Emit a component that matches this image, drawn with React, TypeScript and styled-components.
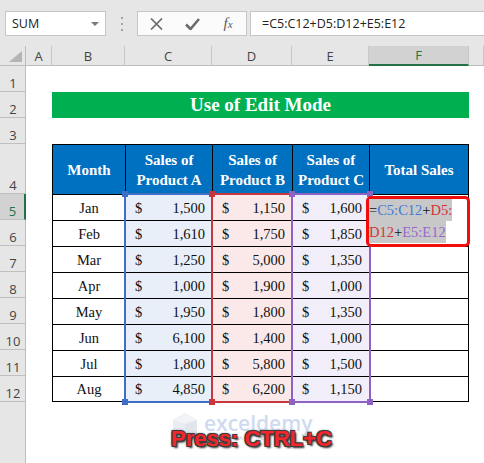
import React from 'react';
import styled, { createGlobalStyle } from 'styled-components';

const GlobalStyle = createGlobalStyle`
  html, body { margin: 0; padding: 0; background: #ffffff; }
  body { width: 484px; height: 463px; overflow: hidden; font-family: "Liberation Serif", serif; }
  * { box-sizing: border-box; }
`;

const COLS = '26px 26px 73px 87px 80px 77px 100px 1fr';
const UI_FONT = '"Segoe UI", "Open Sans", "Noto Sans", sans-serif';
const GREEN = '#217346';

const Page = styled.div`
  position: relative;
  width: 484px;
  height: 463px;
  display: flex;
  flex-direction: column;
  overflow: hidden;
  background: #fff;
`;

/* ---------- formula bar ---------- */
const Toolbar = styled.div`
  height: 46px;
  flex: none;
  background: #e6e6e6;
  display: flex;
  align-items: flex-start;
  padding: 11px 0 0 5px;
  font-family: ${UI_FONT};
`;

const NameBox = styled.div`
  width: 101px;
  height: 25px;
  background: #fff;
  border: 1px solid #c6c6c6;
  display: flex;
  align-items: center;
  justify-content: space-between;
  padding: 0 6px 0 6px;
  font-size: 12.5px;
  color: #222;
`;

const DropArrow = styled.span`
  width: 0;
  height: 0;
  border-left: 4px solid transparent;
  border-right: 4px solid transparent;
  border-top: 4px solid #7a7a7a;
  margin-top: 1px;
`;

const Grip = styled.div`
  width: 2px;
  height: 25px;
  margin: 0 14px 0 15px;
  display: flex;
  flex-direction: column;
  justify-content: center;
  gap: 4px;
  & > i { display: block; width: 2px; height: 2px; background: #a3a3a3; }
`;

const ButtonBox = styled.div`
  width: 110px;
  height: 25px;
  background: #fbfbfb;
  border: 1px solid #c6c6c6;
  display: flex;
  align-items: center;
`;

const ToolButton = styled.div`
  width: 37px;
  height: 23px;
  display: flex;
  align-items: center;
  justify-content: center;
  color: #6b6b6b;
`;

const Fx = styled.span`
  font-family: "Liberation Serif", serif;
  font-style: italic;
  font-size: 15px;
  color: #5a5a5a;
  & > small { font-size: 11px; }
`;

const FormulaInput = styled.div`
  flex: 1;
  height: 25px;
  margin-left: 3px;
  margin-right: -4px;
  background: #fff;
  border: 1px solid #c6c6c6;
  display: flex;
  align-items: center;
  padding-left: 11px;
  font-size: 12.5px;
  color: #222;
`;

/* ---------- sheet ---------- */
const Sheet = styled.div`
  flex: 1;
  display: flex;
  flex-direction: column;
  font-family: ${UI_FONT};
`;

const ColHeaderRow = styled.div`
  height: 20px;
  flex: none;
  display: grid;
  grid-template-columns: ${COLS};
  background: #e6e6e6;
`;

const Corner = styled.div`
  position: relative;
  border-right: 1px solid #bdbdbd;
  border-bottom: 1px solid #bdbdbd;
  &::after {
    content: '';
    position: absolute;
    right: 3px;
    bottom: 3px;
    width: 0;
    height: 0;
    border-left: 13px solid transparent;
    border-bottom: 11px solid #b4b4b4;
  }
`;

const ColHead = styled.div<{ $active?: boolean }>`
  display: flex;
  align-items: center;
  justify-content: center;
  font-size: 13px;
  color: ${(p) => (p.$active ? GREEN : '#444')};
  background: ${(p) => (p.$active ? '#d2d2d2' : '#e6e6e6')};
  border-right: 1px solid #c8c8c8;
  border-bottom: ${(p) => (p.$active ? `2px solid ${GREEN}` : '1px solid #bdbdbd')};
`;

const Body = styled.div`
  position: relative;
  flex: 1;
  display: flex;
  flex-direction: column;
`;

const SheetRow = styled.div<{ $h: number }>`
  height: ${(p) => p.$h}px;
  flex: none;
  display: grid;
  grid-template-columns: ${COLS};
`;

const FillerRow = styled(SheetRow)`
  flex: 1;
  height: auto;
`;

const RowHead = styled.div<{ $active?: boolean }>`
  display: flex;
  align-items: flex-end;
  justify-content: center;
  font-size: 13px;
  line-height: 16px;
  color: ${(p) => (p.$active ? GREEN : '#444')};
  background: ${(p) => (p.$active ? '#d2d2d2' : '#e6e6e6')};
  border-bottom: 1px solid #bfbfbf;
  border-right: ${(p) => (p.$active ? `2px solid ${GREEN}` : '1px solid #bdbdbd')};
  padding-left: 1px;
`;

const EmptyRowHead = styled.div`
  background: #e6e6e6;
  border-right: 1px solid #bdbdbd;
`;

const Blank = styled.div``;

const TitleBar = styled.div`
  grid-column: 3 / 8;
  background: #00b050;
  color: #fff;
  font-family: "Liberation Serif", serif;
  font-weight: bold;
  font-size: 19px;
  display: flex;
  align-items: center;
  justify-content: center;
`;

const TableCell = styled.div<{ $last?: boolean; $right?: boolean }>`
  border-top: 1px solid #000;
  border-left: 1px solid #000;
  border-right: ${(p) => (p.$right ? '1px solid #000' : 'none')};
  border-bottom: ${(p) => (p.$last ? '1px solid #000' : 'none')};
  font-family: "Liberation Serif", serif;
  font-size: 14.5px;
  color: #111;
`;

const HeadCell = styled(TableCell)`
  background: #0070c0;
  color: #fff;
  font-weight: bold;
  font-size: 15px;
  line-height: 20px;
  display: flex;
  align-items: center;
  justify-content: center;
  text-align: center;
  padding-top: 1px;
`;

const MonthCell = styled(TableCell)`
  display: flex;
  align-items: center;
  justify-content: center;
  padding-top: 1px;
`;

const MoneyCell = styled(TableCell)<{ $fill: string }>`
  background: ${(p) => p.$fill};
  display: flex;
  align-items: center;
  justify-content: space-between;
  padding: 1px 7px 0 9px;
`;

const TotalCell = styled(TableCell)`
  background: #fff;
`;

/* ---------- overlays ---------- */
const RangeBox = styled.div<{ $color: string; $left: number; $width: number }>`
  position: absolute;
  top: 127px;
  left: ${(p) => p.$left}px;
  width: ${(p) => p.$width}px;
  height: 210px;
  border: 2px solid ${(p) => p.$color};
  pointer-events: none;
`;

const Handle = styled.span<{ $color: string; $x: 'left' | 'right'; $y: 'top' | 'bottom' }>`
  position: absolute;
  width: 6px;
  height: 6px;
  background: ${(p) => p.$color};
  ${(p) => p.$x}: -4px;
  ${(p) => p.$y}: -4px;
`;

const EditBox = styled.div`
  position: absolute;
  left: 366px;
  top: 130px;
  width: 104px;
  height: 51px;
  background: #fff;
  border: 3px solid #f20d0d;
  border-radius: 5px;
  padding: 0;
  font-family: "Liberation Serif", serif;
  font-size: 14.5px;
`;

const EditLine = styled.div`
  width: fit-content;
  height: 22px;
  line-height: 22px;
  background: #c8c8c8;
  color: #111;
  white-space: nowrap;
`;

const Ref = styled.span<{ $c: string }>`
  color: ${(p) => p.$c};
`;

const Watermark = styled.div`
  position: absolute;
  left: 172px;
  top: 412px;
  display: flex;
  align-items: flex-start;
  gap: 6px;
  opacity: 0.55;
  pointer-events: none;
`;

const WmText = styled.div`
  display: flex;
  flex-direction: column;
  font-family: "Open Sans", sans-serif;
  color: #a9bde6;
  & > b { font-size: 21px; font-weight: 600; line-height: 22px; }
  & > small { font-size: 6px; letter-spacing: 1px; color: #9aa3b5; line-height: 8px; }
`;

const PressText = styled.div`
  position: absolute;
  left: 171px;
  top: 428px;
  font-family: "Liberation Sans", Arial, sans-serif;
  font-weight: bold;
  font-size: 22px;
  line-height: 22px;
  color: #f3262b;
  white-space: nowrap;
  text-shadow: -1px -1px 0 #3c3c3c, 1px -1px 0 #3c3c3c, -1px 1px 0 #3c3c3c, 1px 1px 0 #3c3c3c,
    0 0 3px #2a2a2a, 2px 2px 2px #333;
`;

const data: [string, string, string, string][] = [
  ['Jan', '1,500', '1,150', '1,600'],
  ['Feb', '1,610', '1,750', '1,850'],
  ['Mar', '1,250', '5,000', '1,350'],
  ['Apr', '1,000', '1,900', '1,000'],
  ['May', '1,950', '1,800', '1,350'],
  ['Jun', '6,100', '1,400', '1,000'],
  ['Jul', '1,800', '5,800', '1,500'],
  ['Aug', '4,850', '6,200', '1,150'],
];

const BLUE = '#3f6fc4';
const RED = '#c8363d';
const PURPLE = '#8c62c2';
const FILL_C = '#e9eff9';
const FILL_D = '#fbe9ea';
const FILL_E = '#f1eef9';

const ranges = [
  { color: BLUE, left: 124, width: 89 },
  { color: RED, left: 211, width: 82 },
  { color: PURPLE, left: 291, width: 80 },
];

const corners: ['left' | 'right', 'top' | 'bottom'][] = [
  ['left', 'top'],
  ['right', 'top'],
  ['left', 'bottom'],
  ['right', 'bottom'],
];

export default function App() {
  return (
    <Page>
      <GlobalStyle />
      <Toolbar>
        <NameBox>
          <span>SUM</span>
          <DropArrow />
        </NameBox>
        <Grip>
          <i />
          <i />
          <i />
        </Grip>
        <ButtonBox>
          <ToolButton>
            <svg width="13" height="12" viewBox="0 0 13 12">
              <path d="M1 0.5 L12 11.5 M12 0.5 L1 11.5" stroke="#6b6b6b" strokeWidth="1.7" fill="none" />
            </svg>
          </ToolButton>
          <ToolButton>
            <svg width="15" height="12" viewBox="0 0 15 12">
              <path d="M1 6.5 L5.5 11 L14 1" stroke="#6b6b6b" strokeWidth="2.6" fill="none" />
            </svg>
          </ToolButton>
          <ToolButton>
            <Fx>
              f<small>x</small>
            </Fx>
          </ToolButton>
        </ButtonBox>
        <FormulaInput>=C5:C12+D5:D12+E5:E12</FormulaInput>
      </Toolbar>

      <Sheet>
        <ColHeaderRow>
          <Corner />
          <ColHead>A</ColHead>
          <ColHead>B</ColHead>
          <ColHead>C</ColHead>
          <ColHead>D</ColHead>
          <ColHead>E</ColHead>
          <ColHead $active>F</ColHead>
          <ColHead />
        </ColHeaderRow>

        <Body>
          <SheetRow $h={26}>
            <RowHead>1</RowHead>
          </SheetRow>
          <SheetRow $h={26}>
            <RowHead>2</RowHead>
            <Blank />
            <TitleBar>Use of Edit Mode</TitleBar>
          </SheetRow>
          <SheetRow $h={26}>
            <RowHead>3</RowHead>
          </SheetRow>
          <SheetRow $h={50}>
            <RowHead>4</RowHead>
            <Blank />
            <HeadCell>Month</HeadCell>
            <HeadCell>
              Sales of
              <br />
              Product A
            </HeadCell>
            <HeadCell>
              Sales of
              <br />
              Product B
            </HeadCell>
            <HeadCell>
              Sales of
              <br />
              Product C
            </HeadCell>
            <HeadCell $right>Total Sales</HeadCell>
            <Blank />
          </SheetRow>
          {data.map(([m, c, d, e], i) => {
            const last = i === data.length - 1;
            return (
              <SheetRow $h={26} key={m}>
                <RowHead $active={i === 0}>{5 + i}</RowHead>
                <Blank />
                <MonthCell $last={last}>{m}</MonthCell>
                <MoneyCell $fill={FILL_C} $last={last}>
                  <span>$</span>
                  <span>{c}</span>
                </MoneyCell>
                <MoneyCell $fill={FILL_D} $last={last}>
                  <span>$</span>
                  <span>{d}</span>
                </MoneyCell>
                <MoneyCell $fill={FILL_E} $last={last}>
                  <span>$</span>
                  <span>{e}</span>
                </MoneyCell>
                <TotalCell $last={last} $right />
                <Blank />
              </SheetRow>
            );
          })}
          <FillerRow $h={0}>
            <EmptyRowHead />
          </FillerRow>

          {ranges.map((r) => (
            <RangeBox key={r.color} $color={r.color} $left={r.left} $width={r.width}>
              {corners.map(([x, y]) => (
                <Handle key={x + y} $color={r.color} $x={x} $y={y} />
              ))}
            </RangeBox>
          ))}

          <EditBox>
            <EditLine>
              =<Ref $c="#3f78d6">C5:C12</Ref>+<Ref $c="#d5333a">D5:</Ref>
            </EditLine>
            <EditLine>
              <Ref $c="#d5333a">D12</Ref>+<Ref $c="#9866cc">E5:E12</Ref>
            </EditLine>
          </EditBox>
        </Body>
      </Sheet>

      <Watermark>
        <svg width="26" height="26" viewBox="0 0 26 26">
          <path d="M13 1 L25 8 L25 22 L13 25 L1 20 L1 8 Z" fill="#d8dee8" />
          <path d="M13 1 L25 8 L13 12 L1 8 Z" fill="#e6eaf1" />
          <path d="M13 12 L25 8 L25 22 L13 25 Z" fill="#c9d2e0" />
        </svg>
        <WmText>
          <b>exceldemy</b>
          <small>EXCEL · DATA · BI</small>
        </WmText>
      </Watermark>

      <PressText>Press: CTRL+C</PressText>
    </Page>
  );
}
